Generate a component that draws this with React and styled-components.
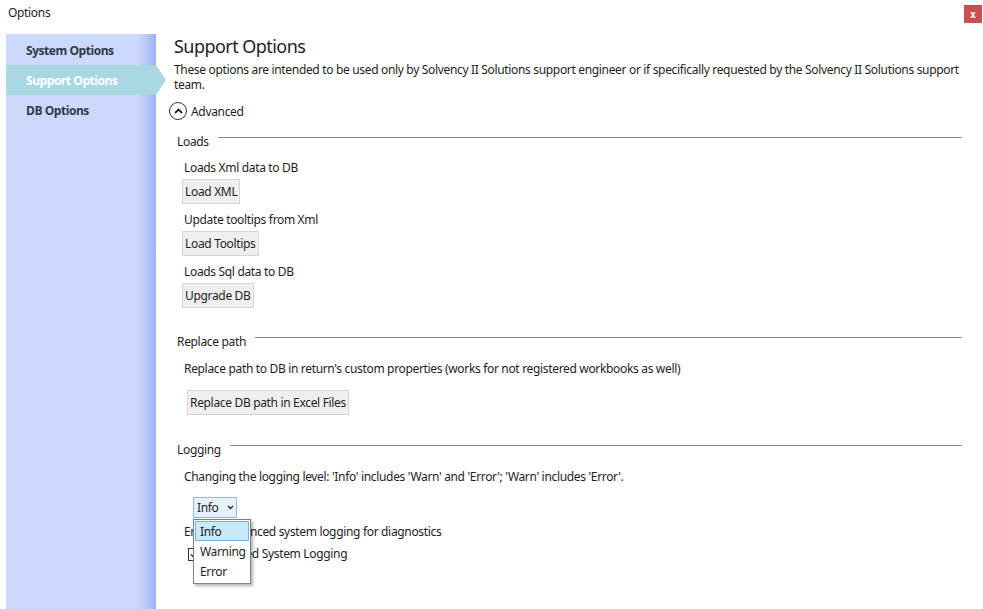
import React from 'react';
import styled, { createGlobalStyle } from 'styled-components';

const Global = createGlobalStyle`
  html, body {
    margin: 0;
    padding: 0;
    background: #ffffff;
  }
  body {
    font-family: "Segoe UI", "Noto Sans", "Open Sans", sans-serif;
    font-size: 12px;
    letter-spacing: -0.33px;
    color: #1e1e1e;
  }
`;

const Window = styled.div`
  width: 983px;
  height: 609px;
  display: flex;
  flex-direction: column;
  overflow: hidden;
  background: #fff;
`;

const TitleBar = styled.div`
  height: 34px;
  display: flex;
  align-items: flex-start;
  justify-content: space-between;
  flex-shrink: 0;
`;

const Title = styled.div`
  padding: 5px 0 0 8px;
  line-height: 16px;
`;

const CloseButton = styled.div`
  margin: 5px 1px 0 0;
  width: 18px;
  height: 18px;
  background: #c8504e;
  color: #fff;
  font-family: "DejaVu Sans Mono", monospace;
  font-weight: bold;
  font-size: 10px;
  letter-spacing: 0;
  display: flex;
  align-items: center;
  justify-content: center;
`;

const Body = styled.div`
  flex: 1;
  display: flex;
  min-height: 0;
`;

const Sidebar = styled.div`
  width: 150px;
  margin-left: 6px;
  flex-shrink: 0;
  background: linear-gradient(
    to right,
    #ccd8fc 0%,
    #ccd8fc 88%,
    #b7c6fa 94%,
    #9aaef6 100%
  );
  display: flex;
  flex-direction: column;
  padding-top: 1px;
`;

const NavItem = styled.div`
  position: relative;
  height: 30px;
  display: flex;
  align-items: center;
  padding-left: 20px;
  font-family: "Open Sans", "Noto Sans", sans-serif;
  font-weight: bold;
  font-size: 12px;
  letter-spacing: -0.45px;
  color: ${(p) => (p.active ? '#ffffff' : '#2d3a4a')};
  background: ${(p) => (p.active ? '#a9d8e2' : 'transparent')};

  &::after {
    content: '';
    display: ${(p) => (p.active ? 'block' : 'none')};
    position: absolute;
    right: -10px;
    top: 0;
    border-top: 15px solid transparent;
    border-bottom: 15px solid transparent;
    border-left: 10px solid #a9d8e2;
  }
`;

const Content = styled.div`
  flex: 1;
  padding: 0 21px 0 18px;
  display: flex;
  flex-direction: column;
`;

const Heading = styled.div`
  font-size: 18px;
  line-height: 24px;
  letter-spacing: -0.55px;
  color: #222;
`;

const Intro = styled.div`
  line-height: 15px;
  margin-top: 4px;
`;

const Expander = styled.div`
  display: flex;
  align-items: center;
  gap: 4px;
  margin-top: 9px;
  margin-left: -5px;
  height: 20px;
`;

const ExpanderIcon = styled.div`
  width: 18px;
  height: 18px;
  border: 1.3px solid #333;
  border-radius: 50%;
  box-sizing: border-box;
  display: flex;
  align-items: center;
  justify-content: center;
`;

const Group = styled.div`
  display: flex;
  flex-direction: column;
  margin-top: ${(p) => p.top}px;
`;

const GroupHeader = styled.div`
  display: flex;
  align-items: center;
  gap: 9px;
  padding-left: 3px;
  height: 16px;

  &::after {
    content: '';
    flex: 1;
    height: 1px;
    background: #8a8a8a;
    margin-top: -7px;
  }
`;

const GroupBody = styled.div`
  display: flex;
  flex-direction: column;
  align-items: flex-start;
  padding-left: 10px;
`;

const Label = styled.div`
  line-height: 16px;
  margin-top: ${(p) => p.top || 0}px;
`;

const Button = styled.div`
  margin-top: ${(p) => p.top || 3}px;
  margin-left: ${(p) => p.left || -2}px;
  height: 25px;
  box-sizing: border-box;
  padding: 0 2px;
  border: 1px solid #d5d5d5;
  background: #efefef;
  display: flex;
  align-items: center;
  line-height: 16px;
`;

const ComboWrap = styled.div`
  position: relative;
  margin-top: 12px;
  margin-left: 9px;
`;

const Combo = styled.div`
  width: 44px;
  height: 21px;
  box-sizing: border-box;
  border: 1px solid #8fbde9;
  background: #e5f1fb;
  display: flex;
  align-items: center;
  gap: 8px;
  padding-left: 3px;
`;

const CheckRow = styled.div`
  display: flex;
  align-items: center;
  gap: 5px;
  margin-top: 6px;
  margin-left: 4px;
  line-height: 16px;
`;

const CheckBox = styled.div`
  width: 13px;
  height: 13px;
  border: 1px solid #333;
  box-sizing: border-box;
  display: flex;
  align-items: center;
  justify-content: center;
`;

const DropDown = styled.div`
  position: absolute;
  left: 0;
  top: 22px;
  width: 58px;
  box-sizing: border-box;
  border: 1px solid #818181;
  background: #fff;
  box-shadow: 2px 2px 3px rgba(0, 0, 0, 0.3);
  padding: 1px 1px 2px;
  display: flex;
  flex-direction: column;
  z-index: 2;
`;

const Option = styled.div`
  height: 20px;
  box-sizing: border-box;
  display: flex;
  align-items: center;
  padding-left: 4px;
  border: 1px solid ${(p) => (p.selected ? '#6fb6e2' : 'transparent')};
  background: ${(p) => (p.selected ? '#cde8f7' : 'transparent')};
`;

export default function App() {
  return (
    <Window>
      <Global />
      <TitleBar>
        <Title>Options</Title>
        <CloseButton>x</CloseButton>
      </TitleBar>
      <Body>
        <Sidebar>
          <NavItem>System Options</NavItem>
          <NavItem active>Support Options</NavItem>
          <NavItem>DB Options</NavItem>
        </Sidebar>
        <Content>
          <Heading>Support Options</Heading>
          <Intro>
            These options are intended to be used only by Solvency II Solutions support engineer or if
            specifically requested by the Solvency II Solutions support
            <br />
            team.
          </Intro>
          <Expander>
            <ExpanderIcon>
              <svg width="9" height="6" viewBox="0 0 9 6">
                <polyline points="1,5 4.5,1.5 8,5" fill="none" stroke="#222" strokeWidth="1.8" />
              </svg>
            </ExpanderIcon>
            <span>Advanced</span>
          </Expander>

          <Group top={12}>
            <GroupHeader>Loads</GroupHeader>
            <GroupBody>
              <Label top={11}>Loads Xml data to DB</Label>
              <Button>Load XML</Button>
              <Label top={8}>Update tooltips from Xml</Label>
              <Button>Load Tooltips</Button>
              <Label top={8}>Loads Sql data to DB</Label>
              <Button>Upgrade DB</Button>
            </GroupBody>
          </Group>

          <Group top={25}>
            <GroupHeader>Replace path</GroupHeader>
            <GroupBody>
              <Label top={12}>
                Replace path to DB in return's custom properties (works for not registered workbooks as
                well)
              </Label>
              <Button top={13} left={3}>Replace DB path in Excel Files</Button>
            </GroupBody>
          </Group>

          <Group top={26}>
            <GroupHeader>Logging</GroupHeader>
            <GroupBody>
              <Label top={12}>
                Changing the logging level: 'Info' includes 'Warn' and 'Error'; 'Warn' includes 'Error'.
              </Label>
              <ComboWrap>
                <Combo>
                  <span>Info</span>
                  <svg width="7" height="5" viewBox="0 0 7 5">
                    <polyline points="1,1 3.5,3.5 6,1" fill="none" stroke="#222" strokeWidth="1.3" />
                  </svg>
                </Combo>
                <DropDown>
                  <Option selected>Info</Option>
                  <Option>Warning</Option>
                  <Option>Error</Option>
                </DropDown>
              </ComboWrap>
              <Label top={6}>Enable enhanced system logging for diagnostics</Label>
              <CheckRow>
                <CheckBox>
                  <svg width="9" height="9" viewBox="0 0 9 9">
                    <polyline points="1,4.5 3.5,7 8,1.5" fill="none" stroke="#222" strokeWidth="1.4" />
                  </svg>
                </CheckBox>
                <span>Enhanced System Logging</span>
              </CheckRow>
            </GroupBody>
          </Group>
        </Content>
      </Body>
    </Window>
  );
}
